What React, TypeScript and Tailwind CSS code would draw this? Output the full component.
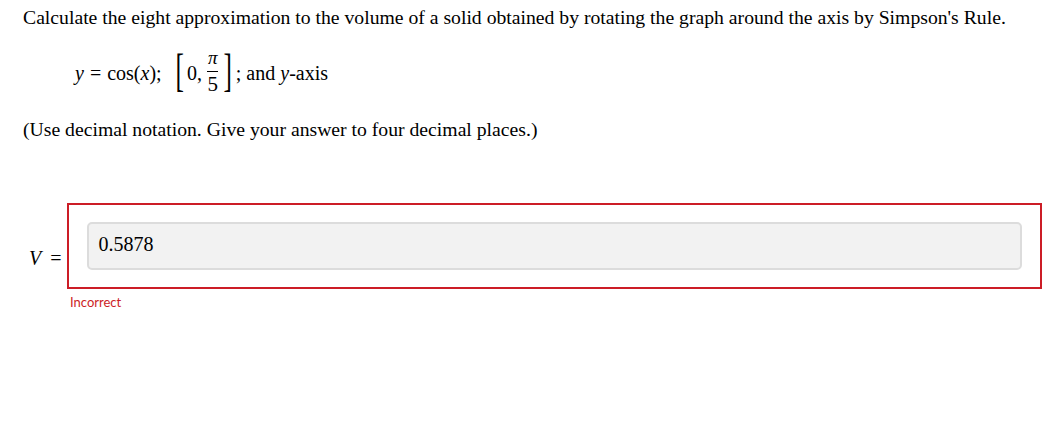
export default function App() {
  return (
    <div className="w-[1048px] h-[434px] bg-white text-black font-['Liberation_Serif',serif] text-[19.7px] leading-[1.4]">
      <div className="pl-[23px] pt-[4px]">
        <p>Calculate the eight approximation to the volume of a solid obtained by rotating the graph around the axis by Simpson's Rule.</p>

        {/* formula line */}
        <div className="pl-[52px] mt-[19px] flex items-center h-[44px] text-[20px]">
          <span className="italic">y</span>
          <span className="mx-[6px]">=</span>
          <span>cos(</span>
          <span className="italic">x</span>
          <span>);</span>
          <span className="ml-[10px] text-[46px] font-light leading-none scale-x-[0.55] -translate-y-[2px]">[</span>
          <span>0,</span>
          <span className="inline-flex flex-col items-center ml-[5px] mr-[2px] leading-none -translate-y-[1px]">
            <span className="italic text-[19px] pb-[4px] border-b border-black px-[1px]">π</span>
            <span className="text-[21px] pt-[2px]">5</span>
          </span>
          <span className="text-[46px] font-light leading-none scale-x-[0.55] -translate-y-[2px]">]</span>
          <span>; and&nbsp;</span>
          <span className="italic">y</span>
          <span>-axis</span>
        </div>

        <p className="mt-[21px]">(Use decimal notation. Give your answer to four decimal places.)</p>
      </div>

      <div className="flex items-end mt-[60px] pl-[29px]">
        <div className="pb-[17px] mr-[5px] flex items-center gap-[9px] text-[20px]">
          <span className="italic">V</span>
          <span>=</span>
        </div>
        <div className="flex-1 mr-[6px]">
          <div className="border-2 border-[#cc1d26] h-[86px] px-[18px] pt-[17px]">
            <div className="h-[48px] bg-[#f2f2f2] border-2 border-[#dcdcdc] rounded-[5px] px-[10px] pt-[6px] text-[20px]">
              0.5878
            </div>
          </div>
        </div>
      </div>
      <div className="pl-[70px] pt-[4px] font-['Lato',sans-serif] text-[13px] text-[#cc1d26]">Incorrect</div>
    </div>
  )
}
